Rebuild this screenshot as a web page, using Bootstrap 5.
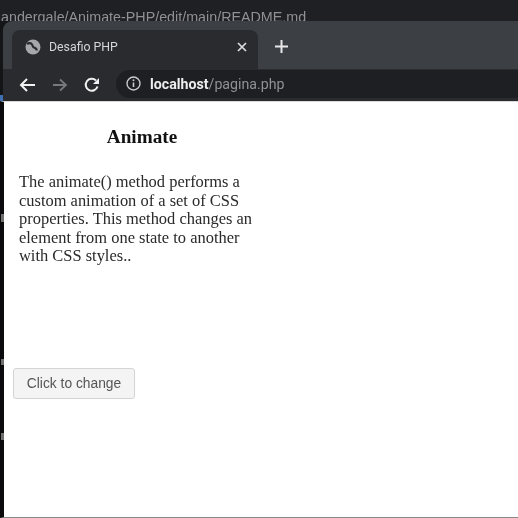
<!DOCTYPE html>
<html lang="en">
<head>
<meta charset="utf-8">
<title>Desafio PHP</title>
<link href="https://cdn.jsdelivr.net/npm/bootstrap@5.3.0/dist/css/bootstrap.min.css" rel="stylesheet">
<style>
html,body{height:518px;overflow:hidden;background:#fff}
.shot{width:518px;height:518px;filter:blur(.35px);background:#fff}
.urlstrip{height:21px;background:#1f2023;color:#8f9194;font:14.3px/1 "Liberation Sans",sans-serif;padding-left:1px;padding-top:10px;overflow:hidden;white-space:nowrap}
.tabwrap{background:#141517}
.tabbar{height:48px;background:#3c3f43;padding-left:9px;padding-top:9px;margin-left:3px;border-radius:9px 0 0 0}
.browsertab{width:246px;height:39px;background:#2a2b2f;border-radius:8px 8px 0 0;padding:0 11px 5px 13px;color:#d5d6d8;font:12.3px "Roboto",sans-serif}
.plusbtn{margin-left:17px;margin-top:-6px}
.toolbar{height:32px;background:#2a2b2f;padding-left:16px;border-left:3px solid #141517}
.omnibox{height:28px;flex:1;background:#1e1f22;border-radius:14px 0 0 14px;margin-left:16px;margin-top:-3px;padding-left:10px;font:14.200px "Roboto",sans-serif;color:#8f9194}
.omnibox b{color:#eceded;font-weight:700}
.omniinfo{margin-right:9px}
.pagewrap{height:417px;border-left:4px solid #0a0a0c;border-bottom:1px solid #8a8a8a;border-top:1px solid #d8d8da;background:#fff}
.pagecol{width:250px;margin-left:15px;font-family:"Liberation Serif",serif;color:#2a2a2a;font-size:16.45px;line-height:18.5px}
.pagetitle{font-size:19.2px;font-weight:700;text-align:center;margin:25px 0 26px;color:#111;line-height:20px;padding-right:4px}
.changebtn{margin-top:102px;margin-left:9px;width:122px;height:31px;padding:0;font:13.8px "Liberation Sans",sans-serif;color:#555;background:#f4f4f5;border:1px solid #d4d4d6;border-radius:3px}
.edgemark{position:absolute;left:1px;width:3px;background:#6f6f6f}
.edgeblue{position:absolute;left:0;top:95px;width:3px;height:6px;background:#3f6fb0}
</style>
</head>
<body>
<div class="shot d-flex flex-column position-relative">
  <div class="urlstrip">andergale/Animate-PHP/edit/main/README.md</div>
  <div class="tabwrap">
    <div class="tabbar d-flex">
      <div class="browsertab d-flex align-items-center">
        <svg width="16" height="16" viewBox="0 0 16 16" class="flex-shrink-0"><circle cx="8" cy="8" r="7.5" fill="#a5a7aa"/><path d="M2 5c2-1.500 4-1 5 .5s.5 2.500 2 3 3 1 2.500 3" fill="none" stroke="#2a2b2f" stroke-width="2.200"/></svg>
        <span class="ms-2">Desafio PHP</span>
        <svg width="10" height="10" viewBox="0 0 10 10" class="ms-auto"><path d="M1 1l8 8M9 1l-8 8" stroke="#dcdde0" stroke-width="1.700"/></svg>
      </div>
      <svg class="plusbtn align-self-center" width="13" height="13" viewBox="0 0 13 13"><path d="M6.500 0v13M0 6.500h13" stroke="#e8e8ea" stroke-width="2"/></svg>
    </div>
  </div>
  <div class="toolbar d-flex align-items-center">
    <svg width="17" height="14" viewBox="0 0 17 14" class="flex-shrink-0"><path d="M16 7H2M8 1L2 7l6 6" fill="none" stroke="#f2f2f3" stroke-width="2"/></svg>
    <svg width="16" height="14" viewBox="0 0 16 14" class="ms-3 flex-shrink-0"><path d="M1 7h13M8 1.500L14 7l-6 5.500" fill="none" stroke="#77797c" stroke-width="1.800"/></svg>
    <svg width="16" height="16" viewBox="0 0 16 16" class="ms-3 flex-shrink-0"><path d="M13.500 9.500A6 6 0 1 1 12 3.500" fill="none" stroke="#f2f2f3" stroke-width="2"/><path d="M15 1v6H9z" fill="#f2f2f3"/></svg>
    <div class="omnibox d-flex align-items-center">
      <svg width="15" height="15" viewBox="0 0 15 15" class="flex-shrink-0 omniinfo"><circle cx="7.500" cy="7.500" r="6.500" fill="none" stroke="#c9cacc" stroke-width="1.400"/><path d="M7.500 6.500v4.500" stroke="#c9cacc" stroke-width="1.600"/><circle cx="7.500" cy="4.300" r="1" fill="#c9cacc"/></svg>
      <span><b>localhost</b>/pagina.php</span>
    </div>
  </div>
  <div class="pagewrap">
    <div class="pagecol">
      <h3 class="pagetitle">Animate</h3>
      <p class="mb-0">The animate() method performs a custom animation of a set of CSS properties. This method changes an element from one state to another with CSS styles..</p>
    </div>
    <button type="button" class="btn changebtn">Click to change</button>
  </div>
  <span class="edgeblue"></span>
  <span class="edgemark" style="top:214px;height:8px"></span>
  <span class="edgemark" style="top:359px;height:6px"></span>
  <span class="edgemark" style="top:433px;height:7px"></span>
</div>
<script src="https://cdn.jsdelivr.net/npm/bootstrap@5.3.0/dist/js/bootstrap.bundle.min.js"></script>
</body>
</html>
